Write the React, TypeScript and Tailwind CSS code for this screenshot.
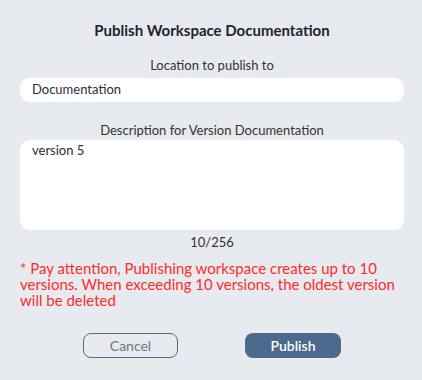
import React from "react";

export default function App() {
  return (
    <div
      className="w-[422px] h-[380px] bg-[#e7eaef] flex flex-col pl-5 pr-[18px] pt-[20px] text-[#1f2430]"
      style={{ fontFamily: "Lato, 'Liberation Sans', sans-serif" }}
    >
      <div className="text-center text-[15px] font-bold leading-5 h-5">
        Publish Workspace Documentation
      </div>
      <div className="mt-[17px] text-center text-[13px] leading-4 text-[#333]">
        Location to publish to
      </div>
      <div className="mt-[5px] h-6 bg-white rounded-[10px] flex items-center px-3 text-[13px] text-[#2a2f3a]">
        Documentation
      </div>
      <div className="mt-[20px] text-center text-[13px] leading-4 text-[#333]">
        Description for Version Documentation
      </div>
      <div className="mt-[2px] h-[90px] bg-white rounded-[10px] px-3 pt-0 text-[13px] leading-5 text-[#2a2f3a]">
        version 5
      </div>
      <div className="mt-[4px] text-center text-[13px] leading-4 text-[#333]">
        10/256
      </div>
      <div className="mt-[10px] text-[15px] leading-4 text-[#ff2a2a]">
        * Pay attention, Publishing workspace creates up to 10 versions. When exceeding 10 versions, the oldest version will be deleted
      </div>
      <div className="mt-[25px] flex justify-center gap-[67px]">
        <button className="w-[95px] h-[25px] rounded-[8px] border border-[#4d6a8c] text-[14px] text-[#6b7686]">
          Cancel
        </button>
        <button className="w-[96px] h-[25px] rounded-[8px] bg-[#4d6a8c] text-[14px] text-white font-semibold">
          Publish
        </button>
      </div>
    </div>
  );
}
